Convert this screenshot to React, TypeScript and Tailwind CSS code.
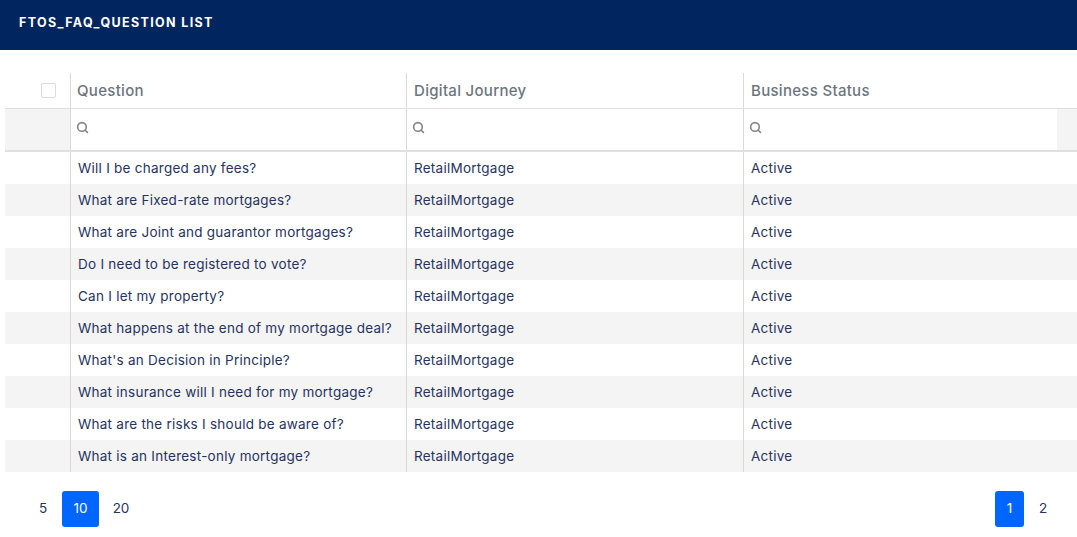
import { Search } from "lucide-react";

const questions = [
  "Will I be charged any fees?",
  "What are Fixed-rate mortgages?",
  "What are Joint and guarantor mortgages?",
  "Do I need to be registered to vote?",
  "Can I let my property?",
  "What happens at the end of my mortgage deal?",
  "What's an Decision in Principle?",
  "What insurance will I need for my mortgage?",
  "What are the risks I should be aware of?",
  "What is an Interest-only mortgage?",
];

const colW = ["w-[336px]", "w-[337px]"];

function FilterCell({ className }: { className: string }) {
  return (
    <div className={`flex items-center border-l border-[#d9d9d9] bg-white pl-[5px] ${className}`}>
      <Search className="mb-[4px] h-[13px] w-[13px] text-[#868686]" strokeWidth={3} />
    </div>
  );
}

export default function App() {
  return (
    <div className="h-[537px] w-[1077px] overflow-hidden bg-white font-['Inter',sans-serif] text-[#27335e]">
      <div className="flex h-[50px] items-start bg-[#01265f] pl-[19px] pt-[14px] text-[12.5px] leading-[17px] font-bold tracking-[1.36px] text-white">
        FTOS_FAQ_QUESTION LIST
      </div>

      <div className="mt-[23px] ml-[5px]">
        <div className="flex h-[35px] text-[15px] font-medium tracking-[0.3px] text-[#6c757d]">
          <div className="flex w-[65px] items-center justify-end pr-[14px]">
            <div className="h-[15px] w-[15px] rounded-[2px] border border-[#dcdcdc]" />
          </div>
          <div className={`flex items-center border-l border-[#d9d9d9] pl-[6px] pt-[2px] ${colW[0]}`}>Question</div>
          <div className={`flex items-center border-l border-[#d9d9d9] pl-[7px] pt-[2px] ${colW[1]}`}>Digital Journey</div>
          <div className="flex flex-1 items-center border-l border-[#d9d9d9] pl-[7px] pt-[2px]">Business Status</div>
        </div>

        <div className="flex h-[44px] border-t border-b-2 border-[#e0e0e0] bg-[#f4f4f4]">
          <div className="w-[65px]" />
          <FilterCell className={colW[0]} />
          <FilterCell className={colW[1]} />
          <FilterCell className="w-[314px]" />
        </div>

        {questions.map((q, i) => (
          <div
            key={q}
            className={`flex h-[32px] text-[13.5px] tracking-[0.25px] ${i % 2 === 1 ? "bg-[#f4f4f4]" : "bg-white"}`}
          >
            <div className="w-[65px]" />
            <div className={`flex items-center whitespace-nowrap border-l border-[#d9d9d9] pl-[7px] ${colW[0]}`}>{q}</div>
            <div className={`flex items-center border-l border-[#d9d9d9] pl-[7px] ${colW[1]}`}>RetailMortgage</div>
            <div className="flex flex-1 items-center border-l border-[#d9d9d9] pl-[7px]">Active</div>
          </div>
        ))}

        <div className="mt-[19px] flex items-center justify-between text-[13.5px]">
          <div className="flex items-center">
            <span className="ml-[28px] flex h-[36px] w-[20px] items-center justify-center pb-[2px]">5</span>
            <span className="ml-[9px] flex h-[36px] w-[37px] items-center justify-center rounded-[3px] bg-[#0066ff] pb-[2px] text-white">10</span>
            <span className="ml-[7px] flex h-[36px] w-[30px] items-center justify-center pb-[2px]">20</span>
          </div>
          <div className="flex items-center">
            <span className="flex h-[36px] w-[29px] items-center justify-center rounded-[3px] bg-[#0066ff] pb-[2px] text-white">1</span>
            <span className="ml-[7px] mr-[22px] flex h-[36px] w-[24px] items-center justify-center pb-[2px]">2</span>
          </div>
        </div>
      </div>
    </div>
  );
}
